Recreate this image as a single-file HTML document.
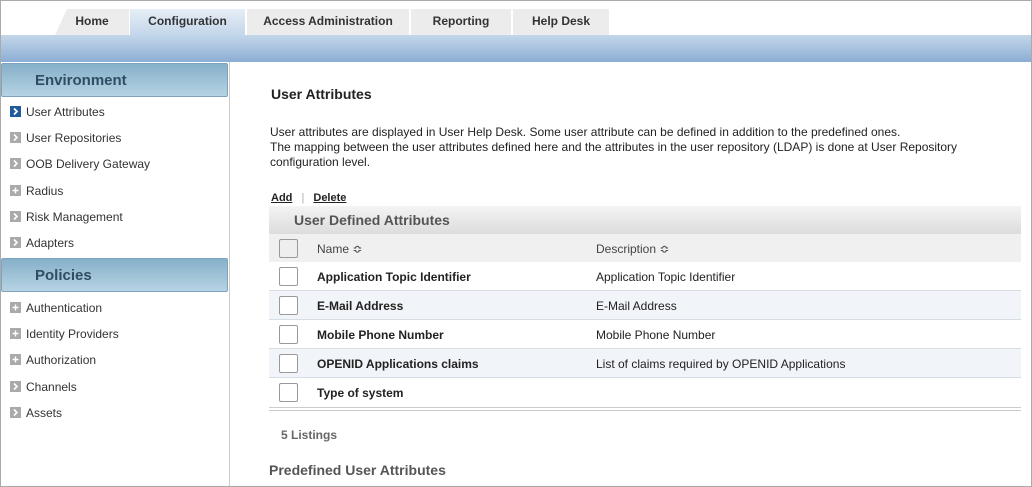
<!DOCTYPE html><html><head><meta charset="utf-8"><style>
*{box-sizing:border-box;margin:0;padding:0}
body{width:1032px;height:487px;overflow:hidden;font-family:"Liberation Sans",Arial,sans-serif;background:#fff;position:relative;color:#222}
.frame{position:absolute;left:0;top:0;width:1032px;height:487px;border:1px solid #aaa}
.tab{position:absolute;top:9px;height:26px;background:#ececec;font-size:12px;font-weight:bold;color:#333;text-align:center;line-height:24px}
.bar{position:absolute;left:1px;top:35px;width:1030px;height:27px;background:linear-gradient(#c3d7ea,#8cadd4)}
.side{position:absolute;left:1px;top:62px;width:229px;height:424px;border-right:1px solid #ccc}
.hdr{position:absolute;left:1px;width:227px;height:34px;border:1px solid #7fa3bd;border-radius:2px;background:linear-gradient(#86b0ca,#b6d3e3);font-size:15px;font-weight:bold;color:#2f4d63;padding-left:33px;line-height:33px}
.it{position:absolute;left:10px;font-size:12px;color:#333;height:14px;line-height:14px}
.it svg{display:inline-block;width:11px;height:11px;margin-right:5px;vertical-align:-1px}
.t{position:absolute;font-size:12px;color:#222}
.row{position:absolute;left:269px;width:752px;height:29px;border-bottom:1px solid #d8dde3}
.cb{position:absolute;left:10px;top:5px;width:19px;height:19px;border:1px solid #999;border-radius:2px;background:#fff}
.n{position:absolute;left:48px;top:8px;font-size:12px;font-weight:bold}
.d{position:absolute;left:327px;top:8px;font-size:12px}
</style></head><body>
<svg width="0" height="0" style="position:absolute"><defs>
<symbol id="ch" viewBox="0 0 11 11"><rect width="11" height="11" fill="#aaa"/><path d="M4 2.5L7 5.5L4 8.5" stroke="#fff" stroke-width="1.6" fill="none"/></symbol>
<symbol id="cha" viewBox="0 0 11 11"><rect width="11" height="11" fill="#1f5b9e"/><path d="M4 2.5L7 5.5L4 8.5" stroke="#fff" stroke-width="1.8" fill="none"/></symbol>
<symbol id="pl" viewBox="0 0 11 11"><rect width="11" height="11" fill="#aaa"/><path d="M5.5 2.5V8.5M2.5 5.5H8.5" stroke="#fff" stroke-width="1.4"/></symbol>
</defs></svg>
<div class="frame"></div>
<div class="tab" style="left:55px;width:74px;clip-path:polygon(12px 0,100% 0,100% 100%,0 100%)">Home</div>
<div class="tab" style="left:130px;width:115px;background:linear-gradient(#e6eef6,#c3d6ea)">Configuration</div>
<div class="tab" style="left:247px;width:162px">Access Administration</div>
<div class="tab" style="left:411px;width:100px">Reporting</div>
<div class="tab" style="left:513px;width:96px">Help Desk</div>
<div class="bar"></div>
<div class="side"></div>
<div class="hdr" style="top:63px">Environment</div>
<div class="it" style="top:105px"><svg><use href="#cha"/></svg>User Attributes</div>
<div class="it" style="top:131px"><svg><use href="#ch"/></svg>User Repositories</div>
<div class="it" style="top:157px"><svg><use href="#ch"/></svg>OOB Delivery Gateway</div>
<div class="it" style="top:184px"><svg><use href="#pl"/></svg>Radius</div>
<div class="it" style="top:210px"><svg><use href="#ch"/></svg>Risk Management</div>
<div class="it" style="top:236px"><svg><use href="#ch"/></svg>Adapters</div>
<div class="hdr" style="top:258px">Policies</div>
<div class="it" style="top:301px"><svg><use href="#pl"/></svg>Authentication</div>
<div class="it" style="top:327px"><svg><use href="#pl"/></svg>Identity Providers</div>
<div class="it" style="top:353px"><svg><use href="#pl"/></svg>Authorization</div>
<div class="it" style="top:380px"><svg><use href="#ch"/></svg>Channels</div>
<div class="it" style="top:406px"><svg><use href="#ch"/></svg>Assets</div>
<div class="t" style="left:271px;top:86px;font-size:14px;font-weight:bold">User Attributes</div>
<div class="t" style="left:270px;top:125px;line-height:15px">User attributes are displayed in User Help Desk. Some user attribute can be defined in addition to the predefined ones.<br>The mapping between the user attributes defined here and the attributes in the user repository (LDAP) is done at User Repository<br>configuration level.</div>
<div class="t" style="left:271px;top:192px;font-size:11px;font-weight:bold"><u>Add</u> <span style="color:#aaa;font-weight:normal;margin:0 6px">|</span> <u>Delete</u></div>
<div style="position:absolute;left:269px;top:206px;width:752px;height:28px;background:linear-gradient(#f4f4f4,#dcdcdc);font-size:14px;font-weight:bold;color:#555;padding-left:25px;line-height:29px">User Defined Attributes</div>
<div class="row" style="top:234px;height:28px;background:#f0f0f0;border:none"><div class="cb" style="background:#eee"></div><div class="n" style="font-weight:normal;color:#444">Name ≎</div><div class="d" style="color:#444">Description ≎</div></div>
<div class="row" style="top:262px"><div class="cb"></div><div class="n">Application Topic Identifier</div><div class="d">Application Topic Identifier</div></div>
<div class="row" style="top:291px;background:#f1f4f8"><div class="cb"></div><div class="n">E-Mail Address</div><div class="d">E-Mail Address</div></div>
<div class="row" style="top:320px"><div class="cb"></div><div class="n">Mobile Phone Number</div><div class="d">Mobile Phone Number</div></div>
<div class="row" style="top:349px;background:#f1f4f8"><div class="cb"></div><div class="n">OPENID Applications claims</div><div class="d">List of claims required by OPENID Applications</div></div>
<div class="row" style="top:378px;border:none"><div class="cb"></div><div class="n">Type of system</div></div>
<div style="position:absolute;left:269px;top:407px;width:752px;height:4px;border-top:1px solid #ccc;border-bottom:1px solid #ccc"></div>
<div class="t" style="left:281px;top:428px;color:#666;font-weight:bold">5 Listings</div>
<div class="t" style="left:269px;top:462px;font-size:14px;font-weight:bold;color:#555">Predefined User Attributes</div>
</body></html>
